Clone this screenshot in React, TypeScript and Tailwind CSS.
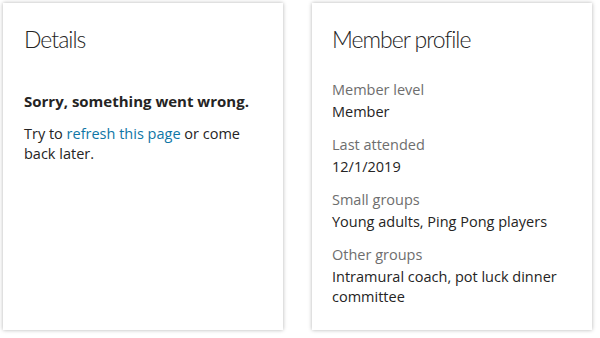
export default function App() {
  return (
    <div className="flex gap-[29px] p-[3px] bg-white w-[600px] h-[338px] text-[14.5px] leading-5 text-[#252424]" style={{ fontFamily: '"Open Sans", "Liberation Sans", sans-serif' }}>
      <div className="w-[280px] h-[327px] bg-white shadow-[0_0_4px_rgba(0,0,0,0.3)] px-[21px] pt-[18px]">
        <h2 className="text-[23px] font-light leading-[36px] tracking-[-1px] text-[#252424]" style={{ fontFamily: 'Lato, "Open Sans", sans-serif' }}>Details</h2>
        <p className="mt-[34px] font-bold text-[15px]">Sorry, something went wrong.</p>
        <p className="mt-[13px]">
          Try to <a className="text-[#0f76a6]">refresh this page</a> or come back later.
        </p>
      </div>

      <div className="w-[280px] h-[327px] bg-white shadow-[0_0_4px_rgba(0,0,0,0.3)] px-[20px] pt-[18px]">
        <h2 className="text-[23px] font-light leading-[36px] tracking-[-1px] text-[#252424]" style={{ fontFamily: 'Lato, "Open Sans", sans-serif' }}>Member profile</h2>
        <div className="mt-[23px] flex flex-col gap-[13px]">
          {[
            ['Member level', 'Member'],
            ['Last attended', '12/1/2019'],
            ['Small groups', 'Young adults, Ping Pong players'],
            ['Other groups', 'Intramural coach, pot luck dinner committee'],
          ].map(([label, value]) => (
            <div key={label}>
              <div className="text-[#6e6e6e] mb-[2px]">{label}</div>
              <div>{value}</div>
            </div>
          ))}
        </div>
      </div>
    </div>
  );
}
